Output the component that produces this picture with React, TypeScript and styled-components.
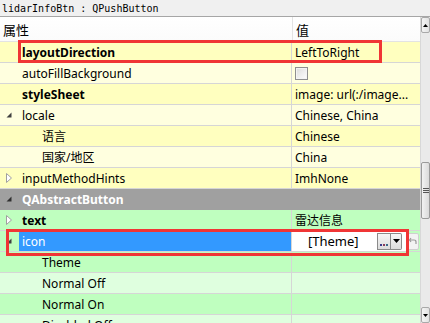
import styled, { createGlobalStyle } from "styled-components";

const Global = createGlobalStyle`
  html, body { margin: 0; padding: 0; background: #ffffff; }
  body { font-family: "Noto Sans", "Noto Sans CJK SC", sans-serif; }
`;

const Frame = styled.div`
  width: 430px;
  height: 323px;
  overflow: hidden;
  position: relative;
  background: #ffffff;
  display: flex;
  flex-direction: column;
`;

const TitleBar = styled.div`
  height: 16px;
  border-bottom: 1px solid #a6a6a6;
  background: #f0f0f0;
  display: flex;
  align-items: center;
  padding-left: 2px;
  color: #000;
`;

const TitleText = styled.span`
  font-family: "DejaVu Sans Mono", "Liberation Mono", monospace;
  font-size: 10px;
  letter-spacing: 0;
  white-space: pre;
`;

const Body = styled.div`
  flex: 1;
  display: flex;
  min-height: 0;
`;

const Table = styled.div`
  flex: 1;
  display: flex;
  flex-direction: column;
`;

const Header = styled.div`
  height: 24px;
  border-bottom: 1px solid #e3e3e3;
  display: grid;
  grid-template-columns: 292px 1fr;
  background: linear-gradient(#ffffff, #fbfbfb);
  font-family: "Noto Sans CJK SC", sans-serif;
  font-size: 13px;
  color: #000;
`;

const HeadCell = styled.div`
  padding-left: 3px;
  line-height: 25px;
  & + & {
    border-left: 1px solid #e3e3e3;
  }
`;

const rowColors: Record<string, string> = {
  y1: "#ffffbf",
  y2: "#ffffdf",
  g1: "#bfffbf",
  g2: "#dfffdf",
  gray: "#a0a0a0",
};

const Row = styled.div<{ $tone: string }>`
  height: 20px;
  border-bottom: 1px solid ${(p) => (p.$tone === "gray" ? "#a0a0a0" : "#d6d6d6")};
  background: ${(p) => rowColors[p.$tone]};
  display: grid;
  grid-template-columns: 292px 1fr;
  font-size: 12px;
  color: #000;
`;

const NameCell = styled.div<{ $bold?: boolean; $group?: boolean }>`
  display: flex;
  align-items: center;
  border-right: 1px solid ${(p) => (p.$group ? "#a0a0a0" : "#d6d6d6")};
  font-weight: ${(p) => (p.$bold ? 700 : 400)};
  color: ${(p) => (p.$group ? "#ffffff" : "#000")};
  white-space: nowrap;
`;

const Toggle = styled.span`
  width: 19px;
  height: 20px;
  flex: none;
  display: flex;
  align-items: center;
  padding-left: 6px;
  box-sizing: border-box;
`;

const Label = styled.span<{ $indent: number; $selected?: boolean }>`
  flex: 1;
  height: 19px;
  display: flex;
  align-items: center;
  padding-left: ${(p) => 3 + p.$indent * 20}px;
  background: ${(p) => (p.$selected ? "#3399ff" : "transparent")};
  color: ${(p) => (p.$selected ? "#ffffff" : "inherit")};
`;

const ValueCell = styled.div<{ $editor?: boolean }>`
  display: flex;
  align-items: center;
  padding-left: ${(p) => (p.$editor ? 0 : 3)}px;
  white-space: nowrap;
  overflow: hidden;
`;

const Check = styled.span`
  width: 11px;
  height: 11px;
  border: 1px solid #8e8f8f;
  background: linear-gradient(135deg, #dcdcdc, #fefefe);
  box-shadow: inset 0 0 0 1px #f4f4f4;
`;

const Editor = styled.div`
  display: flex;
  align-items: center;
  height: 20px;
`;

const EditorField = styled.div`
  width: 114px;
  height: 20px;
  background: #ffffff;
  display: flex;
  align-items: center;
  padding: 0 4px 0 16px;
  box-sizing: border-box;
  font-size: 13px;
`;

const EditorText = styled.span`
  flex: 1;
`;

const MiniButton = styled.span<{ $w: number }>`
  width: ${(p) => p.$w}px;
  height: 17px;
  box-sizing: border-box;
  border: 1px solid #8a8a8a;
  background: linear-gradient(#f6f6f6, #dcdcdc);
  display: flex;
  align-items: flex-end;
  justify-content: center;
  padding-bottom: 3px;
  &:first-of-type {
    border-radius: 2px 0 0 2px;
  }
  & + & {
    border-left: none;
    border-radius: 0 2px 2px 0;
    align-items: center;
    padding-bottom: 0;
  }
`;

const ResetButton = styled.span`
  width: 12px;
  height: 17px;
  margin-left: 1px;
  box-sizing: border-box;
  border: 1px solid #cfcfcf;
  border-radius: 2px;
  background: #f3f3f3;
  display: flex;
  align-items: center;
  justify-content: center;
`;

const ScrollBar = styled.div`
  width: 9px;
  background: #eaeaea;
  border-left: 1px solid #d8d8d8;
  display: flex;
  flex-direction: column;
  justify-content: space-between;
`;

const ScrollBtn = styled.div`
  height: 16px;
  box-sizing: border-box;
  border: 1px solid #a9a9a9;
  border-radius: 2px;
  background: linear-gradient(90deg, #f4f4f4, #e2e2e2);
  display: flex;
  align-items: center;
  justify-content: center;
`;

const ScrollTrack = styled.div`
  flex: 1;
  padding-top: 129px;
`;

const Thumb = styled.div`
  height: 57px;
  box-sizing: border-box;
  border: 1px solid #9a9a9a;
  border-radius: 2px;
  background: linear-gradient(90deg, #f2f2f2, #dadada);
  display: flex;
  flex-direction: column;
  align-items: center;
  justify-content: center;
  gap: 1px;
`;

const Grip = styled.span`
  width: 6px;
  height: 1px;
  background: #555;
`;

const Highlight = styled.div<{ $x: number; $y: number; $w: number; $h: number }>`
  position: absolute;
  left: ${(p) => p.$x}px;
  top: ${(p) => p.$y}px;
  width: ${(p) => p.$w}px;
  height: ${(p) => p.$h}px;
  box-sizing: border-box;
  border: 3px solid #f03535;
  pointer-events: none;
`;

const Expanded = ({ color = "#404040" }: { color?: string }) => (
  <svg width="6" height="6" viewBox="0 0 6 6">
    <polygon points="5.5,0.5 5.5,5.5 0.5,5.5" fill={color} />
  </svg>
);

const Collapsed = () => (
  <svg width="6" height="10" viewBox="0 0 6 10">
    <polygon points="0.5,0.5 5.5,5 0.5,9.5" fill="#ffffff" stroke="#a0a0a0" />
  </svg>
);

type Prop = {
  name: string;
  value?: React.ReactNode;
  tone: string;
  indent?: number;
  bold?: boolean;
  toggle?: "open" | "closed";
  group?: boolean;
  selected?: boolean;
};

const props: Prop[] = [
  { name: "layoutDirection", value: "LeftToRight", tone: "y1", bold: true },
  { name: "autoFillBackground", value: <Check />, tone: "y2" },
  { name: "styleSheet", value: "image: url(:/image...", tone: "y1", bold: true },
  { name: "locale", value: "Chinese, China", tone: "y2", toggle: "open" },
  { name: "语言", value: "Chinese", tone: "y1", indent: 1 },
  { name: "国家/地区", value: "China", tone: "y2", indent: 1 },
  { name: "inputMethodHints", value: "ImhNone", tone: "y1", toggle: "closed" },
  { name: "QAbstractButton", tone: "gray", bold: true, group: true, toggle: "open" },
  { name: "text", value: "雷达信息", tone: "g1", bold: true, toggle: "closed" },
  { name: "icon", tone: "g1", toggle: "open", selected: true },
  { name: "Theme", tone: "g1", indent: 1 },
  { name: "Normal Off", tone: "g2", indent: 1 },
  { name: "Normal On", tone: "g1", indent: 1 },
  { name: "Disabled Off", tone: "g2", indent: 1 },
];

const IconEditor = () => (
  <Editor>
    <EditorField>
      <EditorText>[Theme]</EditorText>
      <MiniButton $w={14}>
        <svg width="8" height="2" viewBox="0 0 8 2">
          <rect x="0" y="0" width="2" height="2" fill="#3a3a8a" />
          <rect x="3" y="0" width="2" height="2" fill="#8a3a5a" />
          <rect x="6" y="0" width="2" height="2" fill="#3a6a8a" />
        </svg>
      </MiniButton>
      <MiniButton $w={11}>
        <svg width="7" height="4" viewBox="0 0 7 4">
          <polygon points="0,0 7,0 3.5,4" fill="#000" />
        </svg>
      </MiniButton>
    </EditorField>
    <ResetButton>
      <svg width="8" height="8" viewBox="0 0 8 8">
        <path d="M2 1 L0.5 3 L2 5 M0.8 3 H5 Q7 3 7 5 V7" fill="none" stroke="#9a9a9a" strokeWidth="1.2" />
      </svg>
    </ResetButton>
  </Editor>
);

export default function App() {
  return (
    <>
      <Global />
      <Frame>
        <TitleBar>
          <TitleText>lidarInfoBtn : QPushButton</TitleText>
        </TitleBar>
        <Body>
          <Table>
            <Header>
              <HeadCell>属性</HeadCell>
              <HeadCell>值</HeadCell>
            </Header>
            {props.map((p) => (
              <Row key={p.name} $tone={p.tone}>
                <NameCell $bold={p.bold} $group={p.group}>
                  <Toggle>
                    {p.toggle === "open" && <Expanded color={p.group ? "#303030" : "#404040"} />}
                    {p.toggle === "closed" && <Collapsed />}
                  </Toggle>
                  <Label $indent={p.indent ?? 0} $selected={p.selected}>
                    {p.name}
                  </Label>
                </NameCell>
                <ValueCell $editor={p.selected}>{p.selected ? <IconEditor /> : p.value}</ValueCell>
              </Row>
            ))}
          </Table>
          <ScrollBar>
            <ScrollBtn>
              <svg width="5" height="3" viewBox="0 0 5 3">
                <polygon points="2.5,0 5,3 0,3" fill="#000" />
              </svg>
            </ScrollBtn>
            <ScrollTrack>
              <Thumb>
                <Grip />
                <Grip />
                <Grip />
              </Thumb>
            </ScrollTrack>
            <ScrollBtn>
              <svg width="5" height="3" viewBox="0 0 5 3">
                <polygon points="0,0 5,0 2.5,3" fill="#000" />
              </svg>
            </ScrollBtn>
          </ScrollBar>
        </Body>
        <Highlight $x={18} $y={40} $w={364} $h={23} />
        <Highlight $x={6} $y={229} $w={403} $h={27} />
      </Frame>
    </>
  );
}
